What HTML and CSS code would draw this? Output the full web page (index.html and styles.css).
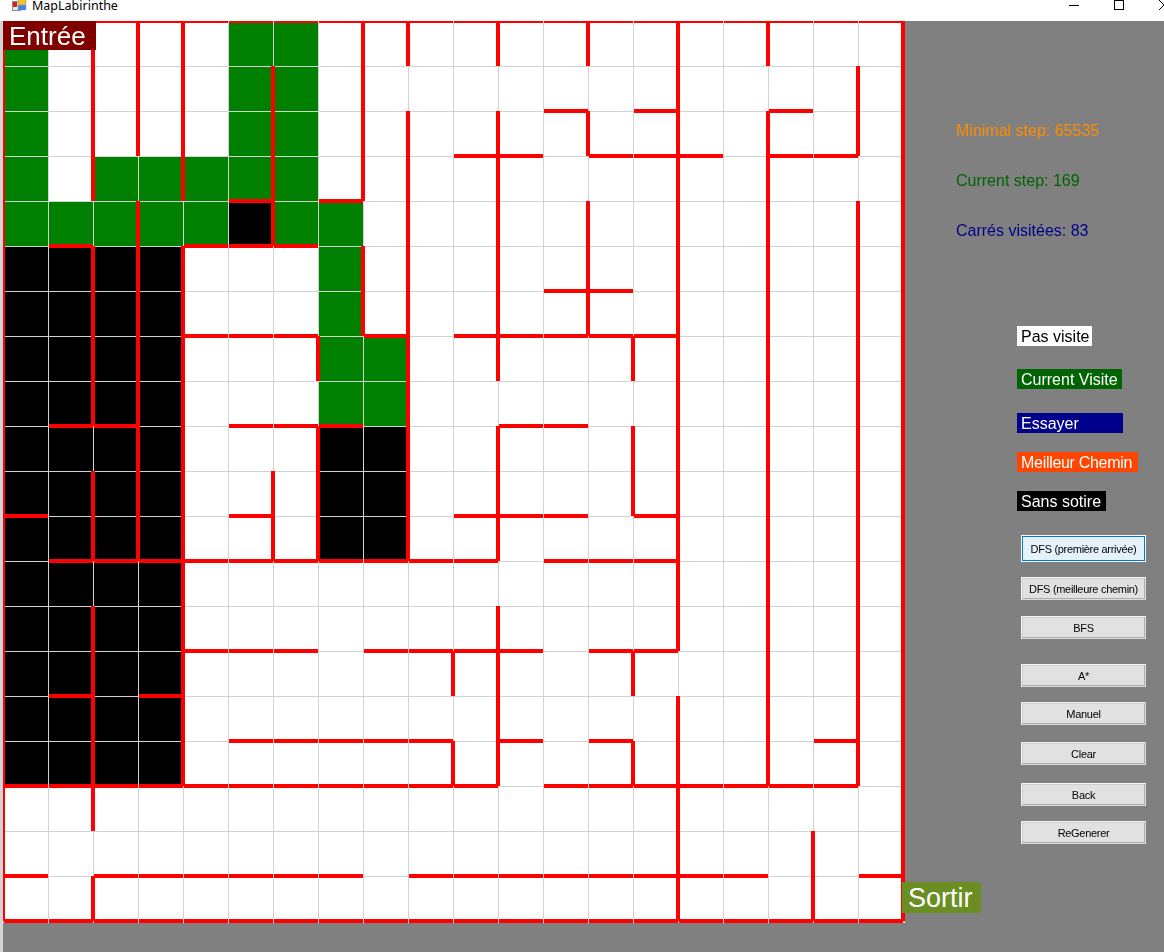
FILE: index.html
```html
<html>
<head>
<meta charset="utf-8">
<title>MapLabirinthe</title>
<link rel="stylesheet" href="styles.css">
<script type="text/javascript" src="board.js"></script>
</head>
<body onload="drawBoard();">

<div id="titleBar">
	<svg class="appIcon" width="15" height="12" viewBox="0 0 15 12">
		<rect x="0.5" y="2.5" width="8" height="9" fill="#e8e8e8" stroke="#8a8a8a"/>
		<rect x="1" y="3" width="4" height="5" fill="#d02020"/>
		<rect x="6" y="0" width="8" height="6" fill="#f2c230" stroke="#b58a10" stroke-width="0.5"/>
		<rect x="6" y="6" width="8" height="5" fill="#4a7fd8" stroke="#8aa8d8" stroke-width="0.5"/>
	</svg>
	<span id="titleText">MapLabirinthe</span>
	<div id="windowButtons">
		<svg width="10" height="10" viewBox="0 0 10 10"><path d="M0 5.5H10" stroke="#000" fill="none"/></svg>
		<svg width="10" height="10" viewBox="0 0 10 10"><rect x="0.5" y="0.5" width="9" height="9" stroke="#000" fill="none"/></svg>
		<svg width="10" height="10" viewBox="0 0 10 10"><path d="M0 0L10 10M10 0L0 10" stroke="#000" fill="none"/></svg>
	</div>
</div>

<div id="mainPanel">

	<div id="boardBox">
		<canvas id="board" width="902" height="902"></canvas>
		<div class="marker entree">Entrée</div>
		<div class="marker sortir">Sortir</div>
	</div>

	<div id="sidePanel">
		<div id="stats">
			<div class="stat minimal">Minimal step: 65535</div>
			<div class="stat current">Current step: 169</div>
			<div class="stat visited">Carrés visitées: 83</div>
		</div>

		<div id="legend">
			<div class="key pasVisite">Pas visite</div>
			<div class="key currentVisite">Current Visite</div>
			<div class="key essayer">Essayer</div>
			<div class="key meilleur">Meilleur Chemin</div>
			<div class="key sansSortie">Sans sotire</div>
		</div>

		<div id="buttons">
			<button class="btn focused">DFS (première arrivée)</button>
			<button class="btn">DFS (meilleure chemin)</button>
			<button class="btn">BFS</button>
			<button class="btn">A*</button>
			<button class="btn">Manuel</button>
			<button class="btn">Clear</button>
			<button class="btn">Back</button>
			<button class="btn">ReGenerer</button>
		</div>
	</div>

</div>

</body>
</html>
```

FILE: styles.css
```css
html, body{
	margin: 0;
	width: 1164px;
	height: 952px;
	overflow: hidden;
	background: #ffffff;
	font: 16px "Liberation Sans", Arial, sans-serif;
}
#titleBar{
	display: flex;
	align-items: flex-start;
	height: 21px;
	overflow: hidden;
	background: #ffffff;
}
.appIcon{
	display: block;
	margin-left: 12px;
	margin-top: -1px;
}
#titleText{
	margin-left: 5px;
	margin-top: -2px;
	font: 12.5px/16px "Noto Sans", sans-serif;
	color: #000000;
}
#windowButtons{
	display: flex;
	gap: 35px;
	margin-left: auto;
	margin-right: -5px;
}
#windowButtons svg{
	display: block;
}
#mainPanel{
	display: flex;
	height: 931px;
	background: #808080;
	border-left: 3px solid #d4d4d4;
}
#boardBox{
	position: relative;
	width: 902px;
	height: 902px;
	flex: none;
}
canvas{
	display: block;
}
.marker{
	position: absolute;
	color: #ffffff;
	font-size: 26px;
	line-height: 30px;
}
.marker.entree{
	left: 0;
	top: 0;
	width: 93px;
	height: 29px;
	padding-left: 6px;
	box-sizing: border-box;
	background: #800000;
}
.marker.sortir{
	left: 899px;
	top: 861px;
	width: 79px;
	height: 31px;
	padding-left: 6px;
	box-sizing: border-box;
	background: #6b8e23;
	font-size: 27px;
	line-height: 32px;
}
#sidePanel{
	flex: 1;
	position: relative;
}
#stats{
	display: grid;
	grid-auto-rows: 18px;
	row-gap: 32px;
	margin-left: 51px;
	padding-top: 101px;
}
.stat{
	line-height: 18px;
	white-space: nowrap;
}
.stat.minimal{
	color: #ff8c00;
}
.stat.current{
	color: #006400;
}
.stat.visited{
	color: #00008b;
}
#legend{
	display: grid;
	grid-template-rows: 43px 44px 39px 39px 20px;
	justify-items: start;
	margin-left: 112px;
	margin-top: 86px;
}
.key{
	height: 20px;
	line-height: 22px;
	padding-left: 4px;
	box-sizing: border-box;
	white-space: nowrap;
	color: #ffffff;
}
.key.pasVisite{
	width: 75px;
	background: #ffffff;
	color: #000000;
}
.key.currentVisite{
	width: 105px;
	background: #006400;
}
.key.essayer{
	width: 106px;
	background: #00008b;
}
.key.meilleur{
	width: 121px;
	background: #ff4500;
	letter-spacing: -0.3px;
}
.key.sansSortie{
	width: 89px;
	background: #000000;
}
#buttons{
	display: grid;
	grid-template-rows: 42px 39px 48px 38px 40px 41px 38px 23px;
	align-items: start;
	margin-left: 116px;
	margin-top: 24px;
	width: 125px;
}
.btn{
	display: block;
	width: 125px;
	height: 23px;
	padding: 1px 0 0 0;
	box-sizing: border-box;
	font: 11px "Liberation Sans", Arial, sans-serif;
	letter-spacing: -0.3px;
	color: #000000;
	background: #e1e1e1;
	border: 1px solid;
	border-color: #f4f4f4 #dcdcdc #dcdcdc #f4f4f4;
	box-shadow: inset -1px -1px 0 #adadad, inset 1px 1px 0 #cfcfcf;
	white-space: nowrap;
}
.btn.focused{
	height: 27px;
	background: #e5f1fb;
	border-color: #ffffff;
	box-shadow: inset 0 0 0 1px #0078d7;
}
```

FILE: board.js
```js
var CELL = 45;
var SIZE = 20;

// rows or columns written as "0-3,5-8"
function expand(text){
	var out = [];
	text.split(",").forEach(function(part){
		var ends = part.split("-");
		var a = parseInt(ends[0]);
		var b = parseInt(ends[ends.length - 1]);
		for(var i = a; i <= b; i++){
			out.push(i);
		}
	});
	return out;
}

var greenCells = {
	0: "0,5-6",
	1: "0,5-6",
	2: "0,5-6",
	3: "0,2-6",
	4: "0-4,6-7",
	5: "7",
	6: "7",
	7: "7-8",
	8: "7-8"
};
var blackCells = {
	4: "5",
	5: "0-3",
	6: "0-3",
	7: "0-3",
	8: "0-3",
	9: "0-3,7-8",
	10: "0-3,7-8",
	11: "0-3,7-8",
	12: "0-3",
	13: "0-3",
	14: "0-3",
	15: "0-3",
	16: "0-3"
};

// line number : columns crossed
var horizontalWalls = {
	0: "0-19",
	2: "12,14,17",
	3: "10-11,13-15,17-18",
	4: "5,7",
	5: "1,4-6",
	6: "12-13",
	7: "4-6,8,10-14",
	9: "1-2,5-7,11-12",
	11: "0,5,10-12,14",
	12: "1-10,12-14",
	14: "4-6,8-11,13-14",
	15: "1,3",
	16: "5-9,11,13,18",
	17: "0-10,12-18",
	19: "0,2-7,9-16,19",
	20: "0-19"
};

// line number : rows crossed
var verticalWalls = {
	0: "0-19",
	2: "0-3,5-8,10-11,13-17,19",
	3: "0-2,4-11",
	4: "0-3,5-16",
	6: "1-4,10-11",
	7: "7,9-11",
	8: "0-3,5-6",
	9: "0,2-11",
	10: "14,16",
	11: "0,2-7,9-11,13-16",
	13: "0,2,4-6",
	14: "7,9-10,14,16",
	15: "0-13,15-19",
	17: "0,2-16",
	18: "18-19",
	19: "1-2,4-16",
	20: "0-19"
};

function fillCells(ctx, cells, color){
	ctx.fillStyle = color;
	for(var row in cells){
		expand(cells[row]).forEach(function(col){
			ctx.fillRect(col * CELL, row * CELL, CELL, CELL);
		});
	}
}

function drawBoard(){
	var ctx = document.getElementById("board").getContext("2d");
	var i;

	ctx.fillStyle = "#ffffff";
	ctx.fillRect(0, 0, 902, 902);

	fillCells(ctx, greenCells, "#008000");
	fillCells(ctx, blackCells, "#000000");

	ctx.fillStyle = "#d3d3d3";
	for(i = 0; i <= SIZE; i++){
		ctx.fillRect(i * CELL, 0, 1, 902);
		ctx.fillRect(0, i * CELL, 902, 1);
	}

	ctx.fillStyle = "#ff0000";
	for(var line in horizontalWalls){
		expand(horizontalWalls[line]).forEach(function(col){
			ctx.fillRect(col * CELL + 1, line * CELL - 2, CELL - 1, 4);
		});
	}
	for(var line2 in verticalWalls){
		expand(verticalWalls[line2]).forEach(function(row){
			ctx.fillRect(line2 * CELL - 2, row * CELL, 4, CELL);
		});
	}
}
```
